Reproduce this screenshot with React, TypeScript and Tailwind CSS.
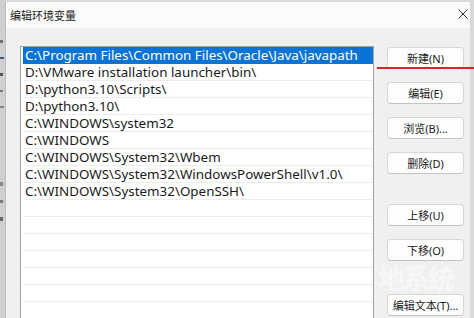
import { ReactNode } from "react";

const paths = [
  "C:\\Program Files\\Common Files\\Oracle\\Java\\javapath",
  "D:\\VMware installation launcher\\bin\\",
  "D:\\python3.10\\Scripts\\",
  "D:\\python3.10\\",
  "C:\\WINDOWS\\system32",
  "C:\\WINDOWS",
  "C:\\WINDOWS\\System32\\Wbem",
  "C:\\WINDOWS\\System32\\WindowsPowerShell\\v1.0\\",
  "C:\\WINDOWS\\System32\\OpenSSH\\",
  "",
  "",
  "",
  "",
  "",
  "",
  "",
];

function DialogButton({ children, className = "" }: { children: ReactNode; className?: string }) {
  return (
    <button
      className={`h-[22px] w-full shrink-0 rounded-[4px] border border-[#d6d6d6] border-b-[#c2c2c2] bg-[#fdfdfd] text-[11px] leading-none text-[#1b1b1b] ${className}`}
    >
      {children}
    </button>
  );
}

export default function App() {
  return (
    <div
      className="relative flex h-[318px] w-[474px] overflow-hidden bg-[#d9d9d9]"
      style={{ fontFamily: '"Noto Sans", "Noto Sans CJK SC", sans-serif' }}
    >
      {/* bits of the window behind */}
      <div className="flex w-[5px] shrink-0 flex-col gap-[14px] bg-[#cfcfcf] pt-[40px]">
        <div className="h-[3px] w-[3px] bg-[#6d6d6d]" />
        <div className="h-[2px] w-[4px] bg-[#3d5f8a]" />
        <div className="h-[3px] w-[3px] bg-[#555]" />
        <div className="h-[2px] w-[3px] bg-[#777]" />
        <div className="h-[2px] w-[4px] bg-[#888]" />
        <div className="mt-[60px] h-[4px] w-[3px] bg-[#888]" />
        <div className="h-[3px] w-[3px] bg-[#777]" />
        <div className="h-[4px] w-[3px] bg-[#666]" />
      </div>

      <div className="mt-[2px] flex w-[465px] shrink-0 flex-col border-l border-[#bdbdbd]">
        {/* title bar */}
        <div className="flex h-[26px] shrink-0 items-center justify-between bg-[#fbfbfb] pl-[4px] pr-[2px]">
          <span className="text-[11px] text-[#1a1a1a]" style={{ fontFamily: '"Noto Sans CJK SC", sans-serif' }}>
            编辑环境变量
          </span>
          <svg width="10" height="10" viewBox="0 0 10 10" className="mb-[2px]">
            <path d="M0.5 0.5 L9.5 9.5 M9.5 0.5 L0.5 9.5" stroke="#333" strokeWidth="1" fill="none" />
          </svg>
        </div>

        {/* body */}
        <div className="flex flex-1 bg-[#f0f0f0] pl-[14px] pt-[18px]">
          <div className="w-[354px] shrink-0 border border-[#a3a3a3] bg-white pl-[2px]">
            {paths.map((p, i) => (
              <div
                key={i}
                className={`h-[17px] truncate pl-[2px] text-[13.4px] leading-[17px] ${
                  i === 0 ? "bg-[#0a74d6] text-white" : "border-b border-[#ededed] text-[#1a1a1a]"
                }`}
              >
                {p}
              </div>
            ))}
          </div>

          <div className="ml-[13px] flex w-[77px] shrink-0 flex-col pt-[1px]">
            <DialogButton>新建(N)</DialogButton>
            <DialogButton className="mt-[13px]">编辑(E)</DialogButton>
            <DialogButton className="mt-[13px]">浏览(B)...</DialogButton>
            <DialogButton className="mt-[13px]">删除(D)</DialogButton>
            <DialogButton className="mt-[30px]">上移(U)</DialogButton>
            <DialogButton className="mt-[13px]">下移(O)</DialogButton>
            <DialogButton className="mt-[33px]">编辑文本(T)...</DialogButton>
          </div>
        </div>
      </div>

      {/* red annotation line */}
      <div className="absolute left-[377px] top-[67px] h-[2px] w-[97px] bg-[#d9232b]" />

      {/* watermark */}
      <div
        className="absolute left-[378px] top-[264px] text-[27px] font-bold leading-none tracking-[-2px] text-white opacity-50"
        style={{ fontFamily: '"Noto Sans CJK SC", sans-serif' }}
      >
        地系统
      </div>
    </div>
  );
}
